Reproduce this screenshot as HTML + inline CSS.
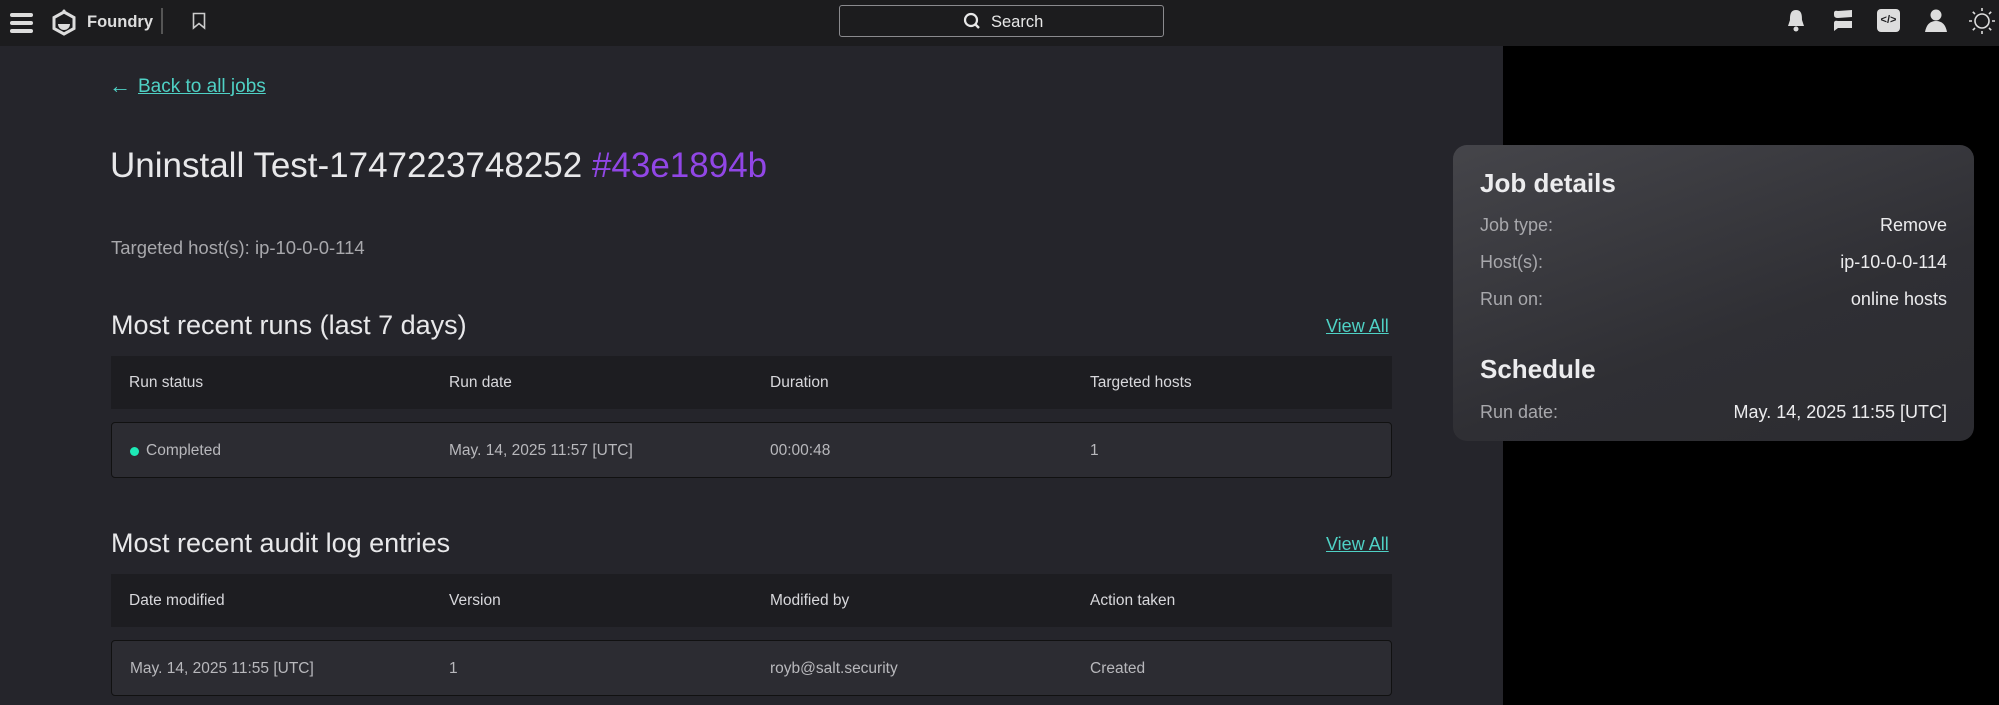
<!DOCTYPE html>
<html><head><meta charset="utf-8"><style>
*{box-sizing:border-box;margin:0;padding:0}
body{width:1999px;height:705px;overflow:hidden;background:#000;font-family:"Liberation Sans",sans-serif;position:relative}
.hdr{position:absolute;left:0;top:0;width:1999px;height:46px;background:#1c1c1e}
.main{position:absolute;left:0;top:46px;width:1503px;height:659px;background:#25252b}
.a{position:absolute;white-space:nowrap}
.bar{position:absolute;left:111px;width:1281px;height:53px;background:#1d1d21}
.row{position:absolute;left:111px;width:1281px;height:56px;background:#2c2c32;border:1.5px solid #111;border-radius:4px}
.th{color:#d8d8dc;font-size:15.5px}
.td{color:#b8b8bc;font-size:15.5px}
.h2{color:#e8e8ea;font-size:27px}
.va{color:#4fd1c5;font-size:18px;text-decoration:underline}
.card{position:absolute;left:1453px;top:145px;width:521px;height:296px;border-radius:14px;background:linear-gradient(160deg,#45454a,#2f2f34 60%,#2c2c31)}
.lab{color:#a8a8ac;font-size:18px}
.val{color:#ececee;font-size:18px;right:27px}
</style></head><body>
<div class="hdr">
<svg class="a" style="left:10px;top:12px" width="24" height="22"><rect x="0" y="1" width="23" height="4" rx="2" fill="#ddd"/><rect x="0" y="9" width="23" height="4" rx="2" fill="#ddd"/><rect x="0" y="17" width="23" height="4" rx="2" fill="#ddd"/></svg>
<svg class="a" style="left:51px;top:9px" width="26" height="28" viewBox="0 0 26 28"><path d="M13 3 L23 8.5 V19.5 L13 25 L3 19.5 V8.5 Z" fill="none" stroke="#ddd" stroke-width="3"/><path d="M7 15 a6 6 0 0 0 12 0 Z" fill="#ddd"/><circle cx="13" cy="2" r="1.5" fill="#ddd"/></svg>
<div class="a" style="left:87px;top:13px;color:#ddd;font-size:16.5px;font-weight:bold">Foundry</div>
<div class="a" style="left:161px;top:8px;width:2px;height:26px;background:#555"></div>
<svg class="a" style="left:192px;top:12px" width="14" height="18"><path d="M1.5 1.5 H12.5 V16 L7 11.5 L1.5 16 Z" fill="none" stroke="#ccc" stroke-width="1.6"/></svg>
<div class="a" style="left:839px;top:5px;width:325px;height:32px;border:1.5px solid #8a8a8e;border-radius:3px"></div>
<svg class="a" style="left:963px;top:12px" width="18" height="18"><circle cx="8" cy="8" r="6" fill="none" stroke="#e8e8e8" stroke-width="2.2"/><path d="M12 12 L16 16" stroke="#e8e8e8" stroke-width="2.4"/></svg>
<div class="a" style="left:991px;top:13px;color:#e8e8e8;font-size:16.5px">Search</div>
<svg class="a" style="left:1785px;top:8px" width="22" height="26"><path d="M11 2 C5 2 5 8 5 12 L3 18 H19 L17 12 C17 8 17 2 11 2Z" fill="#ddd"/><circle cx="11" cy="21" r="2.5" fill="#ddd"/></svg>
<svg class="a" style="left:1832px;top:9px" width="22" height="24"><path d="M2 4 Q2 1 6 2 L20 1 L20 8 L6 9 Q2 9 2 6Z M2 14 Q2 11 6 12 L20 12 L20 19 L6 19 L2 22Z" fill="#ddd"/></svg>
<div class="a" style="left:1877px;top:9px;width:23px;height:23px;background:#ddd;border-radius:4px;color:#1c1c1e;font-size:11px;font-weight:bold;text-align:center;line-height:23px">&lt;/&gt;</div>
<svg class="a" style="left:1924px;top:8px" width="24" height="26"><circle cx="12" cy="7" r="5.5" fill="#ddd"/><path d="M1 24 Q3 13 12 13 Q21 13 23 24Z" fill="#ddd"/></svg>
<svg class="a" style="left:1968px;top:7px" width="28" height="28"><circle cx="14" cy="14" r="7" fill="none" stroke="#ddd" stroke-width="1.6"/><g stroke="#ddd" stroke-width="1.6"><path d="M14 1V4M14 24V27M1 14H4M24 14H27M4.8 4.8L7 7M21 21L23.2 23.2M4.8 23.2L7 21M21 7L23.2 4.8"/></g></svg>
</div>
<div class="main"></div>
<div class="a" style="left:109px;top:73px;color:#4fd1c5;font-size:22px">←</div>
<div class="a" style="left:138px;top:76px;color:#4fd1c5;font-size:19px;text-decoration:underline">Back to all jobs</div>
<div class="a" style="left:110px;top:146px;color:#e8e8ea;font-size:35px">Uninstall Test-1747223748252 <span style="color:#9146e6">#43e1894b</span></div>
<div class="a" style="left:111px;top:237px;color:#a8a8ac;font-size:18.5px">Targeted host(s): ip-10-0-0-114</div>
<div class="a h2" style="left:111px;top:310px">Most recent runs (last 7 days)</div>
<div class="a va" style="left:1326px;top:316px">View All</div>
<div class="bar" style="top:356px"></div>
<div class="a th" style="left:129px;top:374px">Run status</div><div class="a th" style="left:449px;top:374px">Run date</div><div class="a th" style="left:770px;top:374px">Duration</div><div class="a th" style="left:1090px;top:374px">Targeted hosts</div>
<div class="row" style="top:422px"></div>
<div class="a" style="left:130px;top:447px;width:9px;height:9px;border-radius:50%;background:#1de9b6"></div>
<div class="a td" style="left:146px;top:442px">Completed</div><div class="a td" style="left:449px;top:442px">May. 14, 2025 11:57 [UTC]</div><div class="a td" style="left:770px;top:442px">00:00:48</div><div class="a td" style="left:1090px;top:442px">1</div>
<div class="a h2" style="left:111px;top:528px">Most recent audit log entries</div>
<div class="a va" style="left:1326px;top:534px">View All</div>
<div class="bar" style="top:574px"></div>
<div class="a th" style="left:129px;top:592px">Date modified</div><div class="a th" style="left:449px;top:592px">Version</div><div class="a th" style="left:770px;top:592px">Modified by</div><div class="a th" style="left:1090px;top:592px">Action taken</div>
<div class="row" style="top:640px"></div>
<div class="a td" style="left:130px;top:660px">May. 14, 2025 11:55 [UTC]</div><div class="a td" style="left:449px;top:660px">1</div><div class="a td" style="left:770px;top:660px">royb@salt.security</div><div class="a td" style="left:1090px;top:660px">Created</div>
<div class="card">
<div class="a" style="left:27px;top:23px;color:#ececee;font-size:26px;font-weight:bold">Job details</div>
<div class="a lab" style="left:27px;top:70px">Job type:</div><div class="a val" style="top:70px">Remove</div>
<div class="a lab" style="left:27px;top:107px">Host(s):</div><div class="a val" style="top:107px">ip-10-0-0-114</div>
<div class="a lab" style="left:27px;top:144px">Run on:</div><div class="a val" style="top:144px">online hosts</div>
<div class="a" style="left:27px;top:209px;color:#ececee;font-size:26px;font-weight:bold">Schedule</div>
<div class="a lab" style="left:27px;top:257px">Run date:</div><div class="a val" style="top:257px">May. 14, 2025 11:55 [UTC]</div>
</div>
</body></html>
